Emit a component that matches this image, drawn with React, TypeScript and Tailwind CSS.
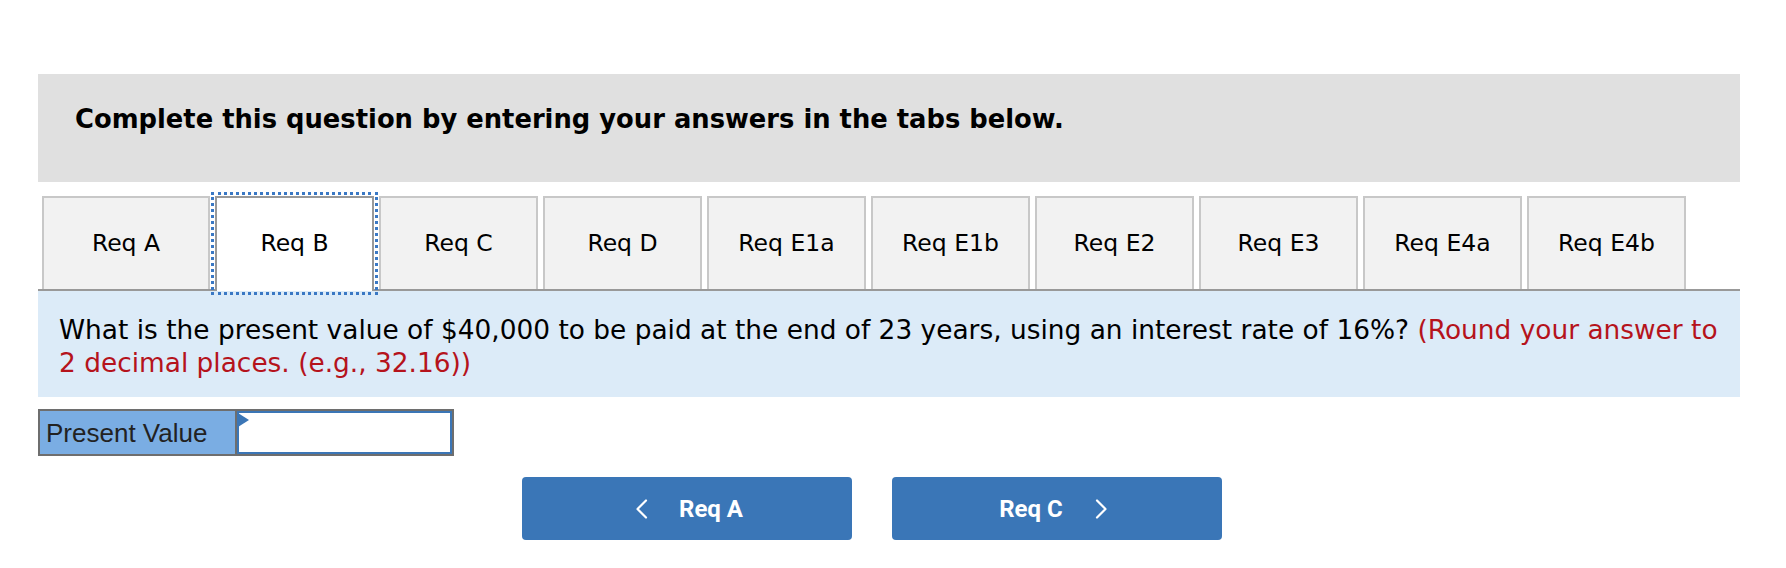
import React from "react";

const tabs = ["Req A", "Req B", "Req C", "Req D", "Req E1a", "Req E1b", "Req E2", "Req E3", "Req E4a", "Req E4b"];

function Chevron({ dir }: { dir: "left" | "right" }) {
  return (
    <svg width="13" height="20" viewBox="0 0 13 20" fill="none" className="shrink-0">
      {dir === "left" ? (
        <polyline points="11,1.5 2.5,10 11,18.5" stroke="white" strokeWidth="2.2" strokeLinecap="round" strokeLinejoin="round" />
      ) : (
        <polyline points="2,1.5 10.5,10 2,18.5" stroke="white" strokeWidth="2.2" strokeLinecap="round" strokeLinejoin="round" />
      )}
    </svg>
  );
}

export default function App() {
  return (
    <div className="min-h-[568px] w-[1786px] bg-white pt-[74px]" style={{ fontFamily: '"DejaVu Sans", Verdana, sans-serif' }}>
      <div className="ml-[38px] w-[1702px]">
        {/* header */}
        <div className="h-[108px] bg-[#e0e0e0] pl-[37px] pt-[30px]">
          <h2 className="text-[25.8px] font-bold leading-[30px] text-black">
            Complete this question by entering your answers in the tabs below.
          </h2>
        </div>

        {/* tabs */}
        <div className="mt-[14px] flex gap-[5px] border-b-2 border-[#999999] pl-[4px]">
          {tabs.map((t, i) => {
            const active = i === 1;
            const w = i === 0 ? "w-[168px]" : "w-[159px]";
            return (
              <div
                key={t}
                className={
                  active
                    ? `${w} relative z-10 -mb-[2px] flex h-[95px] items-center justify-center border-2 border-b-0 border-[#999999] bg-white pb-[2px] text-[23.5px] text-black outline-[3px] outline-offset-[1px] outline-dotted outline-[#3a78c4]`
                    : `${w} flex h-[93px] items-center justify-center border-2 border-b-0 border-[#c8c8c8] bg-[#f2f2f2] text-[23.5px] text-black`
                }
              >
                {t}
              </div>
            );
          })}
        </div>

        {/* question */}
        <div className="bg-[#dcebf8] pb-[18px] pl-[21px] pr-[12px] pt-[22px] text-[26.4px] leading-[33px] text-black">
          What is the present value of $40,000 to be paid at the end of 23 years, using an interest rate of 16%?{" "}
          <span className="text-[#b5131c]">(Round your answer to 2 decimal places. (e.g., 32.16))</span>
        </div>

        {/* answer row */}
        <div className="mt-[12px] flex h-[47px] w-[416px] border-2 border-[#6e6e6e]">
          <div
            className="flex w-[197px] items-center border-r-2 border-[#6e6e6e] bg-[#7aade3] pl-[6px] pt-[2px] text-[26px] text-[#222222]"
            style={{ fontFamily: '"Liberation Sans", Arial, sans-serif' }}
          >
            Present Value
          </div>
          <div className="relative flex-1 border-2 border-[#3b76b6] bg-white">
            <svg width="11" height="14" viewBox="0 0 11 14" className="absolute -left-[1px] top-0">
              <polygon points="0,0 11,7 0,14" fill="#3b76b6" />
            </svg>
          </div>
        </div>

        {/* nav buttons */}
        <div className="ml-[484px] mt-[21px] flex gap-[40px]" style={{ fontFamily: 'Roboto, "Liberation Sans", sans-serif' }}>
          <button className="flex h-[63px] w-[330px] items-center justify-center gap-[31px] rounded-[4px] bg-[#3a76b7] pl-[4px] text-[24px] font-bold text-white">
            <Chevron dir="left" />
            <span>Req A</span>
          </button>
          <button className="flex h-[63px] w-[330px] items-center justify-center gap-[32px] rounded-[4px] bg-[#3a76b7] pr-[7px] text-[24px] font-bold text-white">
            <span>Req C</span>
            <Chevron dir="right" />
          </button>
        </div>
      </div>
    </div>
  );
}
